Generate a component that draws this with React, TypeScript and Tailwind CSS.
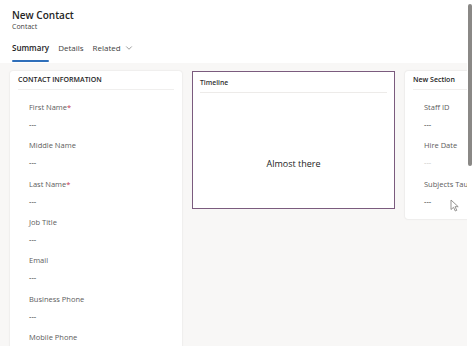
import { ChevronDown } from "lucide-react";

const font = { fontFamily: '"Open Sans", "Noto Sans", sans-serif' };

type Field = { label: string; required?: boolean; faint?: boolean };

const contactFields: Field[] = [
  { label: "First Name", required: true },
  { label: "Middle Name" },
  { label: "Last Name", required: true },
  { label: "Job Title" },
  { label: "Email" },
  { label: "Business Phone" },
  { label: "Mobile Phone" },
];

const sectionFields: Field[] = [
  { label: "Staff ID" },
  { label: "Hire Date", faint: true },
  { label: "Subjects Taught" },
];

const FieldRow = ({ label, required, faint }: Field) => (
  <div className="flex h-[38.33px] flex-col">
    <div className="whitespace-nowrap text-[7.5px] leading-[12px] text-[#5c5c5c]">
      {label}
      {required && <span className="text-[#c4314b]">*</span>}
    </div>
    <div
      className={
        faint
          ? "mt-[5px] text-[7.5px] leading-[12px] text-[#c8c6c4]"
          : "mt-[5px] text-[7.5px] leading-[12px] text-[#242424]"
      }
    >
      ---
    </div>
  </div>
);

export default function App() {
  return (
    <div className="flex h-[346px] w-[474px] overflow-hidden bg-white" style={font}>
      <div className="flex min-w-0 flex-1 flex-col overflow-hidden">
        {/* Header */}
        <div className="shrink-0 bg-white px-[12px] pt-[8px]">
          <h1 className="text-[10px] font-semibold leading-[14px] text-[#242424]">New Contact</h1>
          <p className="text-[7px] leading-[9px] text-[#424242]">Contact</p>
          <div className="mt-[10px] flex items-center gap-[9px] text-[8px] text-[#424242]">
            <div className="flex flex-col">
              <span className="font-semibold leading-[14px] text-[#242424]">Summary</span>
              <span className="mb-[1px] mt-[5px] h-[2px] w-full rounded-full bg-[#2f6fba]" />
            </div>
            <span className="mb-[8px] leading-[14px]">Details</span>
            <span className="mb-[8px] flex items-center gap-[3px] leading-[14px]">
              Related
              <ChevronDown className="h-[10px] w-[10px] text-[#616161]" strokeWidth={1.5} />
            </span>
          </div>
        </div>

        {/* Body */}
        <div className="flex flex-1 items-start gap-[10px] bg-[#f8f7f6] pl-[10px] pt-[8px]">
          {/* Contact information */}
          <div className="flex h-[290px] w-[172px] shrink-0 flex-col rounded-[3px] bg-white px-[8px] pt-[3px] shadow-[0_0_2px_rgba(0,0,0,0.12)]">
            <div className="border-b border-[#f0efee] pb-[3px] text-[7px] font-semibold leading-[12px] text-[#242424]">
              CONTACT INFORMATION
            </div>
            <div className="flex flex-col px-[11px] pt-[11px]">
              {contactFields.map((f) => (
                <FieldRow key={f.label} {...f} />
              ))}
            </div>
          </div>

          {/* Timeline */}
          <div className="flex h-[138px] w-[203px] shrink-0 flex-col border border-[#7b5b7e] bg-white px-[7px] pt-[6px]">
            <div className="border-b border-[#edebe9] pb-[4px] text-[6.8px] font-semibold leading-[10px] text-[#323130]">
              Timeline
            </div>
            <div className="flex flex-1 items-center justify-center pt-[27px] text-[9px] text-[#242424]">
              Almost there
            </div>
          </div>

          {/* New section */}
          <div className="relative flex h-[148px] w-[120px] shrink-0 flex-col rounded-[3px] bg-white px-[8px] pt-[3px] shadow-[0_0_2px_rgba(0,0,0,0.14)]">
            <div className="border-b border-[#f0efee] pb-[3px] text-[7px] font-semibold leading-[12px] text-[#242424]">
              New Section
            </div>
            <div className="flex flex-col px-[11px] pt-[11px]">
              {sectionFields.map((f) => (
                <FieldRow key={f.label} {...f} />
              ))}
            </div>
            {/* mouse pointer */}
            <svg
              className="absolute left-[45px] top-[128px]"
              width="9"
              height="13"
              viewBox="0 0 9 13"
            >
              <path
                d="M1 1 L1 10.5 L3.5 8.3 L5.3 12 L6.8 11.3 L5 7.7 L8.2 7.7 Z"
                fill="white"
                stroke="#8a8886"
                strokeWidth="0.9"
                strokeLinejoin="round"
              />
            </svg>
          </div>
        </div>
      </div>

      {/* Scrollbar */}
      <div className="w-[7px] shrink-0 bg-white pl-[1px] pt-[4px]">
        <div className="h-[162px] w-[4px] rounded-full bg-[#8a8886]" />
      </div>
    </div>
  );
}
